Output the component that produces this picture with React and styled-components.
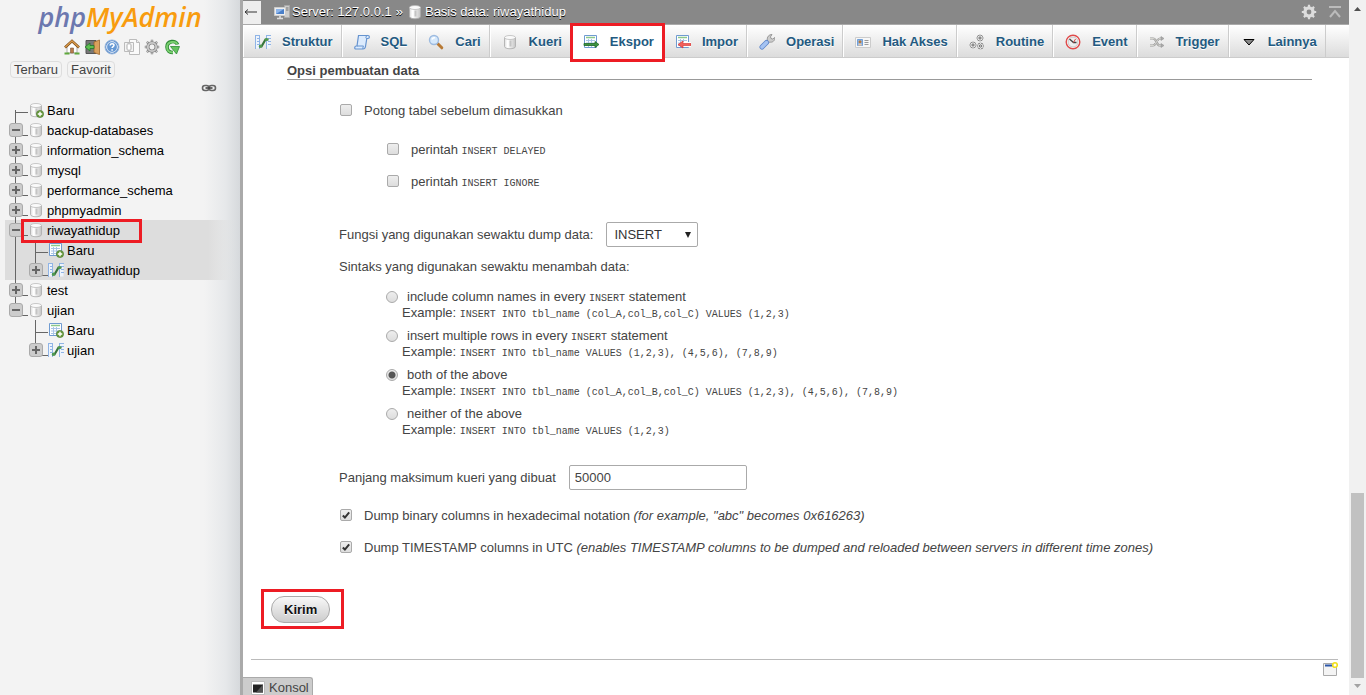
import React from "react";
import styled, { createGlobalStyle, css } from "styled-components";

const GlobalStyle = createGlobalStyle`
  *,
  *::after {
    box-sizing: border-box;
  }
  body {
    margin: 0;
    font-family: "Liberation Sans", Arial, sans-serif;
    font-size: 13px;
    line-height: 16px;
    color: #444;
    background: #fff;
  }
  a {
    color: inherit;
    text-decoration: none;
  }
`;

const Page = styled.div`
  display: flex;
  min-height: 100vh;
`;

/* Navigation */
const Sidebar = styled.aside`
  flex: 0 0 243px;
  border-right: 3px solid #aaa;
  background: linear-gradient(to right, #f3f3f3 85%, #e6e8ea 94%, #d6d9dc);
`;
const Logo = styled.a`
  display: block;
  height: 36px;
  text-align: center;
  font-family: "Open Sans", "Noto Sans", sans-serif;
  font-size: 27px;
  font-style: italic;
  font-weight: 600;
  line-height: 34px;
  color: #f89c0e;
`;
const LogoPhp = styled.span`
  color: #6c78af;
`;
const IconLinks = styled.div`
  display: flex;
  gap: 4px;
  justify-content: center;
  margin: 3px 0 0 3px;
`;
const IconLink = styled.a`
  display: block;
  width: 16px;
  height: 16px;
`;
const Recent = styled.div`
  display: flex;
  gap: 5px;
  margin: 6px 0 0 10px;
`;
const RecentButton = styled.button`
  padding: 0 3px;
  height: 17px;
  font: inherit;
  color: #444;
  background: #f3f3f3;
  border: 1px solid #ddd;
  border-radius: 4px;
  line-height: 15px;
`;
const LinkToggle = styled.div`
  display: flex;
  justify-content: flex-end;
  height: 22px;
  padding: 2px 23px 0 0;
`;
const Tree = styled.ul`
  list-style: none;
  margin: 0;
  padding: 0 0 0 5px;
`;
const Branch = styled.li`
  margin-right: 4px;
  background: ${(props) =>
    props.$active
      ? "linear-gradient(to right, #ddd 88%, transparent)"
      : "none"};
`;
const Row = styled.div`
  display: flex;
  align-items: center;
  position: relative;
  height: 20px;
  color: #000;
`;
const line = "linear-gradient(#666, #666)";
const Indent = styled.span`
  width: 20px;
  height: 20px;
  background: ${(props) =>
    props.$through ? `${line} 10px 0 / 1px 20px no-repeat` : "none"};
`;
/* the connector lines around a toggle */
const Joint = styled.span`
  display: flex;
  align-items: center;
  width: 23px;
  height: 20px;
  padding-left: 4px;
  background:
    ${line} 10px ${(props) => (props.$first ? "10px" : "0")} / 1px
      ${(props) => (props.$first || props.$last ? "10px" : "20px")} no-repeat,
    ${line} 10px ${(props) => (props.$leaf ? "12px" : "15px")} / 15px 1px
      no-repeat;
`;
const Toggle = styled.button`
  display: block;
  width: 14px;
  height: 14px;
  padding: 0;
  border: 1px solid #aaa;
  border-radius: 3px;
  background:
    linear-gradient(#666, #666) center / 8px 2px no-repeat,
    ${(props) =>
      props.$open
        ? ""
        : "linear-gradient(#666, #666) center / 2px 8px no-repeat,"}
    #ccc;
`;
const TreeLink = styled.a`
  margin-left: 3px;
  padding-top: 2px;
`;
const outline = css`
  &::after {
    content: "";
    position: absolute;
    border: 3px solid #ed1c24;
    pointer-events: none;
    z-index: 1;
  }
`;
const MarkedRow = styled(Row)`
  ${outline}
  &::after {
    inset: -1px auto -3px 16px;
    width: 121px;
  }
`;

/* Top of the page */
const Main = styled.main`
  display: flex;
  flex-direction: column;
  flex: 1;
  min-width: 0;
`;
const TopBar = styled.header`
  display: flex;
  align-items: center;
  height: 24px;
  padding-right: 6px;
  color: #fff;
  background: #888;
  text-shadow: 0 1px 0 #000;
`;
const CollapseButton = styled.button`
  width: 18px;
  height: 23px;
  margin-right: 13px;
  padding: 0;
  border: 0;
  background: #eee;
`;
const Crumb = styled.a`
  display: flex;
  align-items: center;
  gap: 2px;
`;
const CrumbSeparator = styled.span`
  margin: 0 4px;
`;
const TopIcons = styled.div`
  display: flex;
  gap: 10px;
  margin-left: auto;
`;
const Tabs = styled.nav`
  display: flex;
  height: 34px;
  border-top: 1px solid #aaa;
  border-bottom: 1px solid #ccc;
  background: linear-gradient(#fff, #dcdcdc);
`;
const Tab = styled.a`
  display: flex;
  align-items: center;
  gap: 11px;
  padding: 1px 8px 0 11px;
  border-right: 1px solid #ccc;
  border-left: 1px solid #fff;
  color: #235a81;
  font-weight: bold;
  text-shadow: 0 1px 0 #fff;
  white-space: nowrap;
`;
const ActiveTab = styled(Tab)`
  position: relative;
  margin-bottom: -1px;
  background: #fff;
  ${outline}
  &::after {
    inset: -2px -3px -4px -2px;
  }
`;

/* Export form */
const Form = styled.form`
  padding: 0 37px 0 18px;
`;
const Heading = styled.h4`
  margin: 5px 0 20px 26px;
  border-bottom: 1px solid #999;
  font-size: 13px;
  line-height: 16px;
`;
const Options = styled.div`
  margin-left: 78px;
`;
const Line = styled.div`
  display: flex;
  align-items: center;
  min-height: 20px;
  margin-top: ${(props) => props.$top || 0}px;
  margin-left: ${(props) => props.$indent || 0}px;
`;
const tick = encodeURIComponent(
  '<svg xmlns="http://www.w3.org/2000/svg" viewBox="0 0 11 11"><path d="M2 6l2.300 2.300L9 2.500" fill="none" stroke="#333" stroke-width="2.200"/></svg>',
);
const CheckInput = styled.input`
  appearance: none;
  width: 12px;
  height: 12px;
  margin: 0 12px 0 1px;
  border: 1px solid #aaa;
  border-radius: 2px;
  background: linear-gradient(#eee, #ddd);
  &:checked {
    background:
      url("data:image/svg+xml,${tick}") center / 10px 10px no-repeat,
      linear-gradient(#eee, #ddd);
  }
`;
const CheckLabel = styled.label`
  padding-top: 2px;
`;
const Code = styled.code`
  font-family: "Liberation Mono", monospace;
  font-size: 10px;
  line-height: 10px;
`;
const Select = styled.select`
  appearance: none;
  width: 92px;
  height: 25px;
  margin-left: 13px;
  padding: 0 7px;
  border: 1px solid #aaa;
  border-radius: 2px;
  font: inherit;
  color: #333;
  background: url("data:image/svg+xml,%3Csvg xmlns='http://www.w3.org/2000/svg' viewBox='0 0 8 8'%3E%3Cpath d='M1 1h6L4 7z' fill='%23222'/%3E%3C/svg%3E")
    right 5px center / 8px 8px no-repeat #fff;
`;
const Radios = styled.div`
  display: flex;
  flex-direction: column;
  gap: 7px;
  margin: 12px 0 27px 47px;
`;
const RadioInput = styled.input`
  appearance: none;
  width: 12px;
  height: 12px;
  margin: 0 9px 1px 0;
  border: 1px solid #aaa;
  border-radius: 50%;
  background: linear-gradient(#eee, #ddd);
  &:checked {
    background:
      radial-gradient(circle, #555 0 3px, transparent 4px),
      linear-gradient(#eee, #ddd);
  }
`;
const RadioLabel = styled.label`
  display: block;
`;
const RadioTitle = styled.span`
  display: flex;
  align-items: center;
  height: 16px;
`;
const Example = styled.span`
  display: block;
  height: 16px;
  margin-left: 16px;
`;
const TextInput = styled.input`
  width: 178px;
  height: 25px;
  margin-left: 13px;
  padding: 0 5px;
  border: 1px solid #aaa;
  border-radius: 2px;
  font: inherit;
  color: #444;
`;
const SubmitBox = styled.div`
  width: fit-content;
  margin-top: 32px;
  padding: 4px 11px 3px 7px;
  border: 3px solid #ed1c24;
`;
const Submit = styled.button`
  display: block;
  height: 27px;
  padding: 0 12px;
  border: 1px solid #aaa;
  border-radius: 13px;
  background: linear-gradient(#f8f8f8, #ccc);
  color: #111;
  font: inherit;
  font-weight: bold;
  text-shadow: 0 1px 0 #fff;
`;
const Footer = styled.footer`
  display: flex;
  justify-content: flex-end;
  height: 18px;
  margin: 30px 11px 0 8px;
  padding-top: 1px;
  border-top: 1px solid #bbb;
`;
const Console = styled.button`
  display: flex;
  align-items: center;
  gap: 3px;
  width: fit-content;
  height: 18px;
  margin-top: auto;
  padding: 2px 3px 0 7px;
  border: 1px solid #aaa;
  border-width: 1px 1px 0 0;
  border-radius: 0 3px 0 0;
  background: #ccc;
  color: #444;
  font: inherit;
`;

/* Window scroll bar */
const ScrollBar = styled.div`
  display: flex;
  flex-direction: column;
  flex: 0 0 17px;
  align-items: center;
  background: #f1f1f1;
`;
const ScrollArrow = styled.svg`
  display: block;
  width: 17px;
  height: 17px;
`;
const ScrollTrack = styled.div`
  display: flex;
  flex: 1;
  flex-direction: column;
  justify-content: flex-end;
`;
const ScrollThumb = styled.div`
  width: 13px;
  height: 28%;
  background: #c1c1c1;
`;

const Svg = styled.svg`
  display: block;
  flex: none;
`;

const Cylinder = () => (
  <>
    <path
      d="M2.500 3.500v9c0 3 11 3 11 0v-9"
      fill="url(#metal)"
      stroke="#aaa"
      strokeWidth=".8"
    />
    <ellipse cx="8" cy="3.500" rx="5.500" ry="2" fill="#fafafa" stroke="#bbb" strokeWidth=".8" />
    <path d="M5.500 6v7" stroke="#fff" strokeWidth="1.500" />
    <path d="M8.500 6.500v6" stroke="#c4c4c4" strokeWidth="2" />
  </>
);
const Grid = () => (
  <>
    <path d="M1.500 1.500h12v12h-12z" fill="#fff" stroke="#6f9bd1" />
    <path d="M3 3.500h9" stroke="#8cc88c" strokeWidth="1.500" />
    <path
      d="M3 6.500h9M3 9h9M3 11.500h9M5.500 5v8M8.500 5v8"
      stroke="#a9c4e6"
      fill="none"
    />
  </>
);
const Plus = () => (
  <>
    <circle cx="12" cy="12" r="3.600" fill="#6a9b3f" stroke="#47752a" strokeWidth=".6" />
    <path d="M12 9.800v4.400M9.800 12h4.400" stroke="#fff" strokeWidth="1.400" />
  </>
);
const gearTeeth =
  "M8 .8v14.400M.8 8h14.400M2.900 2.900l10.200 10.200M13.100 2.900L2.900 13.100";
const Gear = ({ dark, light }) => (
  <>
    <path d={gearTeeth} stroke={dark} strokeWidth="2.400" />
    <path d={gearTeeth} stroke={light} strokeWidth="1" />
    <circle cx="8" cy="8" r="4.200" fill="none" stroke={dark} strokeWidth="3" />
    <circle cx="8" cy="8" r="4.200" fill="none" stroke={light} strokeWidth="1.800" />
    <circle cx="8" cy="8" r="2.400" fill="#f3f3f3" />
  </>
);
const cog = "M0-3.300v6.600M-3.300 0h6.600M-2.300-2.300l4.600 4.600M2.300-2.300l-4.600 4.600";

const drawings = {
  home: (
    <>
      <path d="M3 8v6h10V8L8 3z" fill="#fff" stroke="#999" strokeWidth=".8" />
      <path d="M6.500 9h3v5h-3z" fill="#b97a4a" stroke="#7b5a3c" strokeWidth=".6" />
      <path d="M1 8.500l7-6.500 7 6.500" fill="none" stroke="#7a4a18" strokeWidth="2.600" />
      <path d="M1.200 8.200L8 2l6.800 6.200" fill="none" stroke="#d99a4a" strokeWidth="1.400" />
      <path d="M.5 14.500h5M10.500 14.500h5" stroke="#5fa83c" strokeWidth="2" />
    </>
  ),
  exit: (
    <>
      <path d="M2 1.500h10v13H2z" fill="#777" stroke="#555" />
      <path d="M10 3l5.500-2v14.500L10 13.500z" fill="#d9a05c" stroke="#9a6428" strokeWidth=".8" />
      <path d="M1 8l5-4v2.500h4v3H6V12z" fill="#5fc052" stroke="#23752a" strokeWidth=".8" />
    </>
  ),
  help: (
    <>
      <circle cx="8" cy="8" r="7" fill="#4d82c4" stroke="#9ab8dd" />
      <circle cx="8" cy="8" r="5.400" fill="#6598d4" stroke="#e5eefa" />
      <path
        d="M6.200 6.500c0-2.500 3.800-2.300 3.800-.2 0 1.300-1.900 1.300-1.900 2.700M8.100 10.300v1.400"
        fill="none"
        stroke="#fff"
        strokeWidth="1.500"
      />
    </>
  ),
  docs: (
    <>
      <path d="M5.500.5h7l3 3v12h-10z" fill="#fafafa" stroke="#bbb" />
      <path d="M12.500.5v3h3" fill="#eee" stroke="#bbb" />
      <path d="M.5 3.500h9v9h-9z" fill="#f4f4f4" stroke="#bbb" />
      <path d="M3 5.500c0-1 4-1 4 0v5c0 1-4 1-4 0z" fill="#fff" stroke="#999" strokeWidth=".8" />
    </>
  ),
  gear: <Gear dark="#8c8c8c" light="#c9c9c9" />,
  /* arrow curling back to the left */
  reload: (
    <>
      <path
        d="M13.500 5.500C12 1 3 1.500 3 8c0 4 3 5.500 6 5.500"
        fill="none"
        stroke="#2f8a36"
        strokeWidth="3.600"
      />
      <path d="M6.500 7.500h9l-3 7.500-2-2.500z" fill="#64c25e" stroke="#2f8a36" strokeWidth=".8" />
      <path
        d="M13.200 5.500C12 1.500 3 2 3 8c0 4 3 5.500 6 5.500"
        fill="none"
        stroke="#7bd070"
        strokeWidth="1.800"
      />
    </>
  ),
  link: (
    <g fill="none" stroke="#666" strokeWidth="1.600">
      <rect x="1.500" y="5.500" width="6.500" height="5" rx="2.500" />
      <rect x="8" y="5.500" width="6.500" height="5" rx="2.500" />
      <path d="M4.500 8h7" stroke="#444" />
    </g>
  ),
  db: <Cylinder />,
  dbNew: (
    <>
      <Cylinder />
      <Plus />
    </>
  ),
  tableNew: (
    <>
      <Grid />
      <Plus />
    </>
  ),
  structure: (
    <>
      <path d="M.5 1.500h4v13h-4zM11.500 1.500h4v13h-4z" fill="#eef4fc" />
      <path
        d="M0 1.500h5M2 4.500h3M2 7.500h3M2 10.500h3M.5 1v14M4.500 1v14M11 1.500h5M13 4.500h3M13 7.500h3M13 10.500h3M11.500 1v14"
        fill="none"
        stroke="#8fb4e6"
      />
      <path d="M4 12.500h2.500l4-7h3" fill="none" stroke="#38753b" strokeWidth="2.200" />
      <circle cx="5.500" cy="12.200" r="1.600" fill="#4f9a50" />
      <circle cx="11.500" cy="5.500" r="1.600" fill="#4f9a50" />
    </>
  ),
  sql: (
    <>
      <path
        d="M4.500 1.500H14c1.800 0 1.800 3 0 3h-1.200l-1.300 8c-.3 2-1.300 2.500-2.500 2.500H2c-2 0-1.500-3 .3-3h.7z"
        fill="#dcebfd"
        stroke="#6593cf"
        strokeWidth="1.200"
      />
      <path
        d="M3 12h6.500c-.8 1-.5 3-.8 3M12.800 4.500c-1.500 0-1-2.500.5-3"
        fill="none"
        stroke="#6593cf"
      />
    </>
  ),
  search: (
    <>
      <path d="M9.800 9.800l4 4" stroke="#b87a35" strokeWidth="3" strokeLinecap="round" />
      <circle cx="6" cy="6" r="4.500" fill="#d6e9fc" stroke="#9dbbe0" strokeWidth="1.400" />
      <path d="M4 5.500C4.500 4 6 3.500 7 4" fill="none" stroke="#fff" strokeWidth="1.400" />
    </>
  ),
  exportIcon: (
    <>
      <Grid />
      <path d="M1 9.500h11V7.500l4 3-4 3v-2H1z" fill="#3f9440" stroke="#1f6a27" strokeWidth=".8" />
    </>
  ),
  importIcon: (
    <>
      <Grid />
      <path d="M6 10.500h10" stroke="#fff" strokeWidth="5" />
      <path d="M16 9.500H8V7l-5 3.500L8 14v-2.500h8z" fill="#f2605c" stroke="#d52b2b" strokeWidth=".6" />
    </>
  ),
  wrench: (
    <>
      <path
        d="M8.500 6.500c-1-3.500 1.500-6 4.500-6l-1.500 2.300.5 1.700 1.700.5L16 3.500c0 3-2.500 5.500-5.500 4.500L9.500 9 7.500 7z"
        fill="#ccc"
        stroke="#888"
        strokeWidth=".8"
      />
      <path d="M3 13l4.500-4.500" stroke="#5c85c9" strokeWidth="5" strokeLinecap="round" />
      <path d="M3 13l4.500-4.500" stroke="#a5c3f2" strokeWidth="3.400" strokeLinecap="round" />
    </>
  ),
  card: (
    <>
      <path d="M.5 3.500h15v10H.5z" fill="#f7f7f7" stroke="#ccc" />
      <path d="M2.500 5.500h5v6h-5z" fill="#8fb8ea" stroke="#4e86cc" strokeWidth=".7" />
      <circle cx="5" cy="7.700" r="1.500" fill="#b77a3c" />
      <path d="M3 11.500c.3-2.500 3.700-2.500 4 0z" fill="#f0c8a0" />
      <path d="M9.500 6.500h4M9.500 8.500h4M9.500 10.500h4" stroke="#999" />
    </>
  ),
  routine: (
    <>
      {["11 4", "4 11", "11.500 12"].map((at) => (
        <g key={at} transform={`translate(${at})`}>
          <path d={cog} stroke="#666" strokeWidth="1.800" />
          <circle r="2.600" fill="#eee" stroke="#777" strokeWidth=".5" />
          <path d={cog} stroke="#eee" strokeWidth=".9" />
          <circle r="1.100" fill="#fff" stroke="#444" strokeWidth=".8" />
        </g>
      ))}
    </>
  ),
  clock: (
    <>
      <circle cx="8" cy="8" r="6.800" fill="#fff" stroke="#df4b4b" strokeWidth="1.400" />
      <circle cx="8" cy="8" r="5" fill="#eee" stroke="#bbb" strokeWidth=".8" />
      <path d="M4.500 5l4 3.500h3" fill="none" stroke="#444" strokeWidth="1.300" />
      <path d="M8.500 8.500l2-3.500" stroke="#d44" />
    </>
  ),
  trigger: (
    <g fill="none" stroke="#999" strokeWidth="2.200">
      <path d="M1 4.500h3c4 0 3 7 7 7h2M1 11.500h3c1.500 0 2-1 2.500-2M8.500 6.500c.5-1 1-2 2.500-2h2" />
      <path d="M1 4.500h3c4 0 3 7 7 7h2M1 11.500h3c1.500 0 2-1 2.500-2M8.500 6.500c.5-1 1-2 2.500-2h2" stroke="#e6e6de" strokeWidth=".8" />
      <path d="M12 2.500l3 2-3 2zM12 9.500l3 2-3 2z" fill="#aaa" strokeWidth=".6" />
    </g>
  ),
  more: <path d="M3 5.500h10L8 11z" fill="#888" stroke="#000" />,
  server: (
    <>
      <path d="M10.500 1.500h5v12h-5z" fill="#ccc" stroke="#aaa" />
      <path d="M11.500 4h3M11.500 6h3" stroke="#777" />
      <path d="M.5 3.500h11v8H.5z" fill="#eee" stroke="#ccc" />
      <path d="M2 5h8v5H2z" fill="#4a7fc8" />
      <path d="M2 5h8l-8 5z" fill="#8db5ea" />
      <path d="M3 14.500h6M6 12v2" stroke="#ddd" strokeWidth="1.600" />
    </>
  ),
  arrowLeft: <path d="M2 8h12M2 8l3-2.500M2 8l3 2.500" fill="none" stroke="#333" />,
  topGear: (
    <>
      <path d={gearTeeth} stroke="#ddd" strokeWidth="2.200" />
      <circle cx="8" cy="8" r="4.200" fill="none" stroke="#ddd" strokeWidth="3" />
      <circle cx="8" cy="8" r="2.400" fill="#888" />
    </>
  ),
  toTop: <path d="M2 3h12M3 13l5-6 5 6" fill="none" stroke="#bbb" strokeWidth="2" />,
  newWindow: (
    <>
      <path d="M1.500 2.500h13v12h-13z" fill="#f4f4f4" stroke="#aaa" />
      <path d="M3 4.500h9" stroke="#2c57a8" strokeWidth="2" />
      <circle cx="13" cy="4" r="2.300" fill="#fff" stroke="#f3e11b" strokeWidth="1.600" />
    </>
  ),
  consoleIcon: (
    <>
      <path d="M1.500 1.500h13v13h-13z" fill="#fff" stroke="#bbb" />
      <path d="M3 4.500h10v8H3z" fill="#222" />
      <path d="M13 4.500v8H6z" fill="#555" />
    </>
  ),
};

function Icon({ name, size = 16 }) {
  return (
    <Svg width={size} height={size} viewBox="0 0 16 16" aria-hidden="true">
      <defs>
        <linearGradient id="metal">
          <stop offset="0" stopColor="#ddd" />
          <stop offset=".3" stopColor="#fff" />
          <stop offset="1" stopColor="#c4c4c4" />
        </linearGradient>
      </defs>
      {drawings[name]}
    </Svg>
  );
}

const shortcuts = [
  ["home", "Beranda"],
  ["exit", "Keluar"],
  ["help", "Dokumentasi"],
  ["docs", "Dokumentasi MariaDB"],
  ["gear", "Pengaturan"],
  ["reload", "Muat ulang"],
];

const databases = [
  { name: "Baru", isNew: true },
  { name: "backup-databases", open: true },
  { name: "information_schema" },
  { name: "mysql" },
  { name: "performance_schema" },
  { name: "phpmyadmin" },
  { name: "riwayathidup", open: true, active: true, table: "riwayathidup" },
  { name: "test" },
  { name: "ujian", open: true, table: "ujian" },
];

const tabs = [
  ["structure", "Struktur"],
  ["sql", "SQL"],
  ["search", "Cari"],
  ["db", "Kueri"],
  ["exportIcon", "Ekspor"],
  ["importIcon", "Impor"],
  ["wrench", "Operasi"],
  ["card", "Hak Akses"],
  ["routine", "Routine"],
  ["clock", "Event"],
  ["trigger", "Trigger"],
  ["more", "Lainnya"],
];

const syntaxes = [
  {
    value: "complete",
    title: (
      <>
        include column names in every <Code>INSERT</Code> statement
      </>
    ),
    example: "INSERT INTO tbl_name (col_A,col_B,col_C) VALUES (1,2,3)",
  },
  {
    value: "extended",
    title: (
      <>
        insert multiple rows in every <Code>INSERT</Code> statement
      </>
    ),
    example: "INSERT INTO tbl_name VALUES (1,2,3), (4,5,6), (7,8,9)",
  },
  {
    value: "both",
    title: "both of the above",
    example:
      "INSERT INTO tbl_name (col_A,col_B,col_C) VALUES (1,2,3), (4,5,6), (7,8,9)",
  },
  {
    value: "none",
    title: "neither of the above",
    example: "INSERT INTO tbl_name VALUES (1,2,3)",
  },
];

function Database({ db, last }) {
  const DbRow = db.active ? MarkedRow : Row;
  return (
    <Branch $active={db.active}>
      <DbRow>
        <Joint $first={db.isNew} $last={last} $leaf={db.isNew}>
          {!db.isNew && <Toggle $open={db.open} aria-label={db.name} />}
        </Joint>
        <Icon name={db.isNew ? "dbNew" : "db"} />
        <TreeLink href="#">{db.name}</TreeLink>
      </DbRow>
      {db.table && (
        <>
          <Row>
            <Indent $through={!last} />
            <Joint $leaf />
            <Icon name="tableNew" />
            <TreeLink href="#">Baru</TreeLink>
          </Row>
          <Row>
            <Indent $through={!last} />
            <Joint $last>
              <Toggle aria-label={db.table} />
            </Joint>
            <Icon name="structure" />
            <TreeLink href="#">{db.table}</TreeLink>
          </Row>
        </>
      )}
    </Branch>
  );
}

function Check({ id, children, checked, top, indent }) {
  return (
    <Line $top={top} $indent={indent}>
      <CheckInput type="checkbox" id={id} defaultChecked={checked} />
      <CheckLabel htmlFor={id}>{children}</CheckLabel>
    </Line>
  );
}

function App() {
  return (
    <>
      <GlobalStyle />
      <Page>
        <Sidebar>
          <Logo href="#">
            <LogoPhp>php</LogoPhp>MyAdmin
          </Logo>
          <IconLinks>
            {shortcuts.map(([icon, label]) => (
              <IconLink key={icon} href="#" aria-label={label}>
                <Icon name={icon} />
              </IconLink>
            ))}
          </IconLinks>
          <Recent>
            <RecentButton>Terbaru</RecentButton>
            <RecentButton>Favorit</RecentButton>
          </Recent>
          <LinkToggle>
            <Icon name="link" />
          </LinkToggle>
          <Tree>
            {databases.map((db, index) => (
              <Database
                key={db.name}
                db={db}
                last={index + 1 === databases.length}
              />
            ))}
          </Tree>
        </Sidebar>
        <Main>
          <TopBar>
            <CollapseButton aria-label="Sembunyikan panel">
              <Icon name="arrowLeft" />
            </CollapseButton>
            <Crumb href="#">
              <Icon name="server" />
              Server: 127.0.0.1
            </Crumb>
            <CrumbSeparator>»</CrumbSeparator>
            <Crumb href="#">
              <Icon name="db" />
              Basis data: riwayathidup
            </Crumb>
            <TopIcons>
              <Icon name="topGear" />
              <Icon name="toTop" />
            </TopIcons>
          </TopBar>
          <Tabs>
            {tabs.map(([icon, label]) => {
              const Item = label === "Ekspor" ? ActiveTab : Tab;
              return (
                <Item key={label} href="#">
                  <Icon name={icon} />
                  {label}
                </Item>
              );
            })}
          </Tabs>
          <Form onSubmit={(e) => e.preventDefault()}>
            <Heading>Opsi pembuatan data</Heading>
            <Options>
              <Check id="truncate">Potong tabel sebelum dimasukkan</Check>
              <Check id="delayed" top={19} indent={47}>
                perintah <Code>INSERT DELAYED</Code>
              </Check>
              <Check id="ignore" top={12} indent={47}>
                perintah <Code>INSERT IGNORE</Code>
              </Check>
              <Line $top={31}>
                <label htmlFor="dumpType">
                  Fungsi yang digunakan sewaktu dump data:
                </label>
                <Select id="dumpType" defaultValue="INSERT">
                  <option>INSERT</option>
                  <option>UPDATE</option>
                  <option>REPLACE</option>
                </Select>
              </Line>
              <Line $top={10}>Sintaks yang digunakan sewaktu menambah data:</Line>
              <Radios>
                {syntaxes.map((cur) => (
                  <RadioLabel key={cur.value}>
                    <RadioTitle>
                      <RadioInput
                        type="radio"
                        name="syntax"
                        value={cur.value}
                        defaultChecked={cur.value === "both"}
                      />
                      <span>{cur.title}</span>
                    </RadioTitle>
                    <Example>
                      Example: <Code>{cur.example}</Code>
                    </Example>
                  </RadioLabel>
                ))}
              </Radios>
              <Line>
                <label htmlFor="maxSize">
                  Panjang maksimum kueri yang dibuat
                </label>
                <TextInput id="maxSize" type="text" defaultValue="50000" />
              </Line>
              <Check id="hex" top={15} checked>
                Dump binary columns in hexadecimal notation{" "}
                <em>(for example, "abc" becomes 0x616263)</em>
              </Check>
              <Check id="utc" top={12} checked>
                Dump TIMESTAMP columns in UTC{" "}
                <em>
                  (enables TIMESTAMP columns to be dumped and reloaded between
                  servers in different time zones)
                </em>
              </Check>
            </Options>
            <SubmitBox>
              <Submit type="submit">Kirim</Submit>
            </SubmitBox>
          </Form>
          <Footer>
            <a href="#" aria-label="Buka jendela baru">
              <Icon name="newWindow" />
            </a>
          </Footer>
          <Console>
            <Icon name="consoleIcon" />
            Konsol
          </Console>
        </Main>
        <ScrollBar aria-hidden="true">
          <ScrollArrow viewBox="0 0 17 17">
            <path d="M5 11h7L8.500 7z" fill="#505050" />
          </ScrollArrow>
          <ScrollTrack>
            <ScrollThumb />
          </ScrollTrack>
          <ScrollArrow viewBox="0 0 17 17">
            <path d="M5 6h7l-3.500 4z" fill="#a3a3a3" />
          </ScrollArrow>
        </ScrollBar>
      </Page>
    </>
  );
}

export default App;
